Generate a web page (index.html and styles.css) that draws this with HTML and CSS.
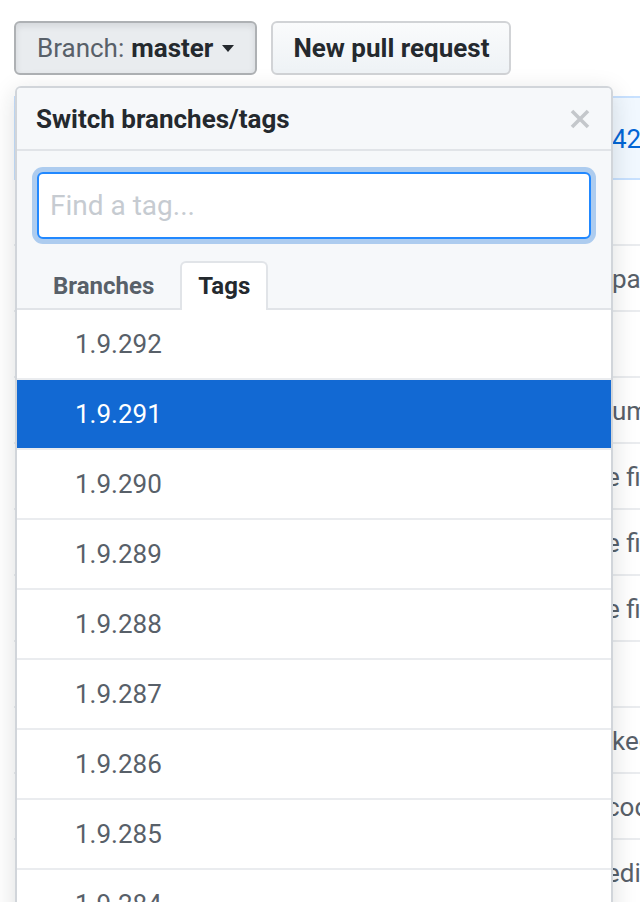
FILE: index.html
```html
<!DOCTYPE html>
<html lang="en">
<head>
  <meta charset="UTF-8">
  <meta name="viewport" content="width=device-width, initial-scale=1.0">
  <title>Switch branches/tags</title>
  <link rel="stylesheet" href="styles.css">
</head>
<body>
  <div class="page">
    <div class="actions">
      <button class="btn selected">Branch: <strong>master</strong><span class="caret"></span></button>
      <button class="btn">New pull request</button>
    </div>

    <div class="files">
      <div class="commit-tease"><span class="msg sha">4271bd3</span></div>
      <div class="file"><span class="msg"></span></div>
      <div class="file"><span class="msg">pass props through</span></div>
      <div class="file"><span class="msg"></span></div>
      <div class="file"><span class="msg">umd build</span></div>
      <div class="file"><span class="msg cut">e fix</span></div>
      <div class="file"><span class="msg cut">e fix</span></div>
      <div class="file"><span class="msg cut">e fix</span></div>
      <div class="file"><span class="msg"></span></div>
      <div class="file"><span class="msg">keep</span></div>
      <div class="file"><span class="msg cut">code</span></div>
      <div class="file"><span class="msg cut">edit</span></div>
    </div>
  </div>

  <div class="select-menu">
    <div class="menu-header">
      <span class="menu-title">Switch branches/tags</span>
      <svg class="close" width="20" height="20" viewBox="0 0 20 20" aria-hidden="true">
        <path d="M2 2 L18 18 M18 2 L2 18" stroke="#c4c7cb" stroke-width="3.6" stroke-linecap="butt"/>
      </svg>
    </div>
    <div class="menu-filters">
      <input class="filter-input" type="text" placeholder="Find a tag...">
      <div class="tabs">
        <span class="tab">Branches</span>
        <span class="tab active">Tags</span>
      </div>
    </div>
    <div class="menu-list">
      <div class="item">1.9.292</div>
      <div class="item focus">1.9.291</div>
      <div class="item">1.9.290</div>
      <div class="item">1.9.289</div>
      <div class="item">1.9.288</div>
      <div class="item">1.9.287</div>
      <div class="item">1.9.286</div>
      <div class="item">1.9.285</div>
      <div class="item">1.9.284</div>
    </div>
  </div>
</body>
</html>
```

FILE: styles.css
```css
:root {
  --text: #24292e;
  --muted: #586069;
  --line: #eaecef;
  --blue: #1269d3;
  --font: Roboto, "Liberation Sans", sans-serif;
}

html, body { overflow: hidden; }
body {
  margin: 0;
  height: 100vh;
  background: #fff;
  color: var(--text);
  font-family: var(--font);
}

.page { padding: 21px 0 0 14px; }
.actions { display: flex; gap: 14px; }

.btn {
  height: 54px;
  padding: 0 20px 0 20px;
  font-family: var(--font);
  font-size: 26px;
  font-weight: 700;
  color: var(--text);
  background: linear-gradient(#fafbfc, #eff3f6 90%);
  border: 2px solid #d1d3d6;
  border-radius: 6px;
  display: flex;
  align-items: center;
}
.btn.selected {
  padding: 0 21px 0 21px;
  font-weight: 400;
  color: var(--muted);
  background: #e9ecef;
  border-color: #aeb1b4;
  box-shadow: inset 0 3px 6px rgba(27, 31, 35, .1);
}
.btn.selected strong { color: var(--text); margin-left: 7px; }
.caret {
  margin-left: 9px;
  border-top: 7px solid var(--text);
  border-left: 6px solid transparent;
  border-right: 6px solid transparent;
}

/* file table behind the menu */
.files { margin-top: 21px; width: 900px; }
.commit-tease {
  box-sizing: border-box;
  height: 84px;
  padding-top: 2px;
  background: #f1f8ff;
  border: 2px solid #c8e1ff;
  display: flex;
  align-items: center;
}
.file {
  box-sizing: border-box;
  height: 66px;
  padding-top: 2px;
  border-bottom: 2px solid var(--line);
  display: flex;
  align-items: center;
}
.msg { margin-left: 598px; font-size: 26px; color: var(--muted); white-space: nowrap; }
.msg.cut { margin-left: 592px; }
.msg.sha { margin-left: 596px; color: #0366d6; }

/* dropdown */
.select-menu {
  position: absolute;
  top: 86px;
  left: 15px;
  width: 598px;
  height: 900px;
  box-sizing: border-box;
  background: #fff;
  border: 2px solid #d1d5da;
  border-radius: 6px 6px 0 0;
  box-shadow: 0 6px 24px rgba(27, 31, 35, .15);
  overflow: hidden;
}
.menu-header {
  height: 61px;
  padding: 0 21px 0 19px;
  background: #f6f8fa;
  border-bottom: 2px solid #e1e4e8;
  display: flex;
  align-items: center;
  justify-content: space-between;
}
.menu-title { font-size: 26px; font-weight: 700; }
.close { margin-top: 1px; }

.menu-filters { background: #f6f8fa; padding: 21px 20px 0; }
.filter-input {
  display: block;
  width: 100%;
  height: 67px;
  box-sizing: border-box;
  padding: 0 11px;
  font-family: var(--font);
  font-size: 28px;
  color: var(--text);
  background: #fff;
  border: 2px solid #2188ff;
  border-radius: 6px;
  box-shadow: 0 0 0 5px rgba(3, 102, 214, .3);
  outline: none;
}
.filter-input::placeholder { color: #c6cbd1; }

.tabs {
  margin: 22px -20px 0;
  padding-left: 17px;
  display: flex;
  gap: 7px;
  border-bottom: 2px solid #e1e4e8;
}
.tab {
  height: 45px;
  padding: 0 17px 2px;
  display: flex;
  align-items: center;
  font-size: 24px;
  font-weight: 700;
  color: var(--muted);
  border: 2px solid transparent;
  border-bottom: 0;
  margin-bottom: -2px;
}
.tab.active {
  color: var(--text);
  background: #fff;
  border-color: #e1e4e8;
  border-radius: 6px 6px 0 0;
  padding: 0 16px 2px;
}

.item {
  height: 68px;
  padding-left: 58px;
  display: flex;
  align-items: center;
  font-size: 26px;
  color: var(--muted);
  border-bottom: 2px solid var(--line);
}
.item.focus { background: var(--blue); color: #fff; }
```
